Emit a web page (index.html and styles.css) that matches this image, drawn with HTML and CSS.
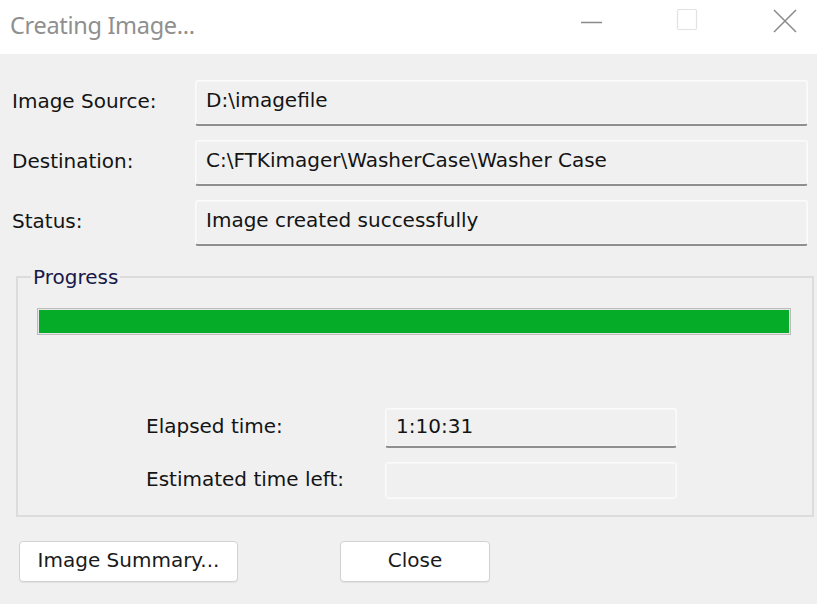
FILE: index.html
```html
<!DOCTYPE html>
<html lang="en">
<head>
<meta charset="utf-8">
<title>Creating Image...</title>
<link rel="stylesheet" href="styles.css">
</head>
<body>
<div class="window">
  <header class="titlebar">
    <span class="title">Creating Image...</span>
    <div class="controls">
      <span class="ctl ctl-min"><svg width="22" height="22" viewBox="0 0 22 22"><line x1="0" y1="11.5" x2="21" y2="11.5" stroke="#8a8a8a" stroke-width="1.5"/></svg></span>
      <span class="ctl ctl-max"><svg width="22" height="22" viewBox="0 0 22 22"><rect x="1.5" y="0.5" width="19" height="20" rx="1.5" fill="none" stroke="#e2e2e2" stroke-width="1.2"/></svg></span>
      <span class="ctl ctl-close"><svg width="24" height="24" viewBox="0 0 24 24"><path d="M1 1 L23 23 M23 1 L1 23" stroke="#8a8a8a" stroke-width="1.5" fill="none"/></svg></span>
    </div>
  </header>

  <main class="content">
    <div class="info">
      <label class="lbl">Image Source:</label>
      <div class="field">D:\imagefile</div>
      <label class="lbl">Destination:</label>
      <div class="field">C:\FTKimager\WasherCase\Washer Case</div>
      <label class="lbl">Status:</label>
      <div class="field">Image created successfully</div>
    </div>

    <fieldset class="group">
      <legend class="legend">Progress</legend>
      <div class="progress"><div class="progress-fill" style="width:100%"></div></div>
      <div class="times">
        <span class="lbl">Elapsed time:</span>
        <div class="field field-time">1:10:31</div>
        <span class="lbl">Estimated time left:</span>
        <div class="field field-time field-disabled"></div>
      </div>
    </fieldset>

    <div class="buttons">
      <button class="btn btn-summary">Image Summary...</button>
      <button class="btn btn-close">Close</button>
    </div>
  </main>
</div>
</body>
</html>
```

FILE: styles.css
```css
* { box-sizing: border-box; }

html, body {
  margin: 0;
  padding: 0;
  background: #f0f0f0;
}

body {
  font-family: "DejaVu Sans", Verdana, sans-serif;
  font-size: 20px;
  color: #1a1a1a;
  width: 817px;
  height: 604px;
  overflow: hidden;
}

.titlebar {
  height: 54px;
  background: #ffffff;
  display: flex;
  align-items: center;
  justify-content: space-between;
  padding-left: 10px;
}

.title {
  font-family: "Noto Sans", "Open Sans", sans-serif;
  font-size: 23.5px;
  color: #8f8f8f;
  margin-top: -5px;
  letter-spacing: -0.3px;
}

.controls {
  display: flex;
  align-items: center;
  height: 100%;
  margin-top: -12px;
}

.ctl {
  display: flex;
  align-items: center;
  justify-content: center;
}

.ctl-min { margin-right: 73px; margin-top: 2px; }
.ctl-max { margin-right: 75px; margin-top: -2px; }
.ctl-close { margin-right: 20px; }

.content {
  padding: 26px 9px 0 12px;
}

.info {
  display: grid;
  grid-template-columns: 183px 1fr;
  row-gap: 14px;
  align-items: center;
}

.lbl {
  display: block;
  white-space: nowrap;
  margin-top: -4px;
  color: #141414;
}

.field {
  height: 46px;
  background: #f0f0f0;
  border: 1px solid #fbfbfb;
  border-bottom: 2px solid #8e8e8e;
  border-radius: 3px;
  padding: 0 10px;
  display: flex;
  align-items: center;
  padding-bottom: 6px;
  white-space: nowrap;
  box-shadow: inset 0 0 0 1px #f6f6f6;
  color: #141414;
}

.group {
  margin: 19px -6px 0 4px;
  border: 2px solid #dcdcdc;
  border-radius: 0;
  padding: 0 21px 16px 19px;
  min-width: 0;
}

.legend {
  padding: 0 2px;
  margin-left: -6px;
  line-height: 24px;
  color: #181848;
}

.progress {
  margin-top: 19px;
  height: 27px;
  border: 1px solid #bcbcbc;
  background: #e6e6e6;
  padding: 1px;
}

.progress-fill {
  height: 100%;
  background: #05ac27;
}

.times {
  display: grid;
  grid-template-columns: 239px 292px;
  row-gap: 14px;
  align-items: center;
  margin-top: 73px;
  padding-left: 109px;
}

.field-time {
  height: 40px;
  padding-bottom: 4px;
}

.field-disabled {
  height: 37px;
  border-bottom: 1px solid #fbfbfb;
}

.buttons {
  display: flex;
  margin-top: 24px;
  padding-left: 7px;
}

.btn {
  font-family: "DejaVu Sans", Verdana, sans-serif;
  font-size: 20px;
  color: #1a1a1a;
  height: 41px;
  background: #ffffff;
  border: 1px solid #d2d2d2;
  border-radius: 4px;
  box-shadow: 0 1px 1px rgba(0,0,0,0.06);
  padding: 0 0 3px;
}

.btn-summary { width: 219px; }
.btn-close { width: 150px; margin-left: 102px; }
```
